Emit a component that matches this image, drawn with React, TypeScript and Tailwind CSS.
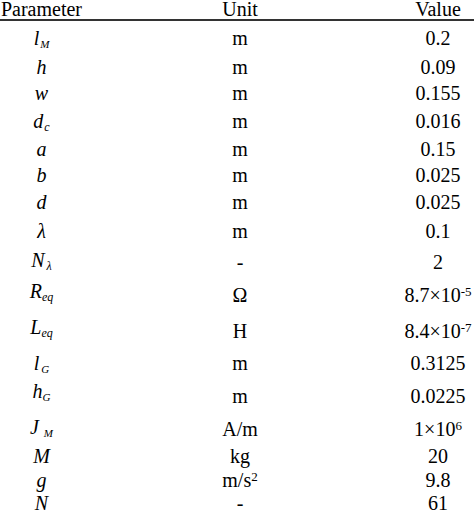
import React from "react";

type Row = {
  param: React.ReactNode;
  unit: React.ReactNode;
  value: React.ReactNode;
  h: string;
  shift?: string;
};

const Sub = ({ children, cls = "text-[11px]" }: { children: React.ReactNode; cls?: string }) => (
  <sub className={`${cls} italic`}>{children}</sub>
);

const Sup = ({ children }: { children: React.ReactNode }) => (
  <sup className="text-[13px]">{children}</sup>
);

const rows: Row[] = [
  { param: <><i>l</i><Sub cls="text-[11px] ml-[1px]">M</Sub></>, unit: "m", value: "0.2", h: "h-[29px]" },
  { param: <i>h</i>, unit: "m", value: "0.09", h: "h-[26px]" },
  { param: <i>w</i>, unit: "m", value: "0.155", h: "h-[28px]" },
  { param: <><i>d</i><Sub cls="text-[12px] ml-[1px]">c</Sub></>, unit: "m", value: "0.016", h: "h-[28px]" },
  { param: <i>a</i>, unit: "m", value: "0.15", h: "h-[26px]" },
  { param: <i>b</i>, unit: "m", value: "0.025", h: "h-[27px]" },
  { param: <i>d</i>, unit: "m", value: "0.025", h: "h-[29px]" },
  { param: <i>λ</i>, unit: "m", value: "0.1", h: "h-[31px]" },
  { param: <><i>N</i><Sub cls="text-[12px] ml-[2px]">λ</Sub></>, unit: "-", value: "2", h: "h-[33px]", shift: "-mt-[2px]" },
  { param: <><i>R</i><Sub cls="text-[12px]">eq</Sub></>, unit: "Ω", value: <>8.7×10<Sup>-5</Sup></>, h: "h-[36px]", shift: "-mt-[4px]" },
  { param: <><i>L</i><Sub cls="text-[12px]">eq</Sub></>, unit: "H", value: <>8.4×10<Sup>-7</Sup></>, h: "h-[32px]", shift: "-mt-[4px]" },
  { param: <><i>l</i><Sub cls="text-[11px] ml-[2px]">G</Sub></>, unit: "m", value: "0.3125", h: "h-[33px]" },
  { param: <><i>h</i><Sub cls="text-[11px]">G</Sub></>, unit: "m", value: "0.0225", h: "h-[33px]", shift: "-mt-[5px]" },
  { param: <><i>J</i><Sub cls="text-[11px] ml-[5px]">M</Sub></>, unit: "A/m", value: <>1×10<Sup>6</Sup></>, h: "h-[27px]", shift: "-mt-[2px]" },
  { param: <i>M</i>, unit: "kg", value: "20", h: "h-[24px]" },
  { param: <i>g</i>, unit: <>m/s<Sup>2</Sup></>, value: "9.8", h: "h-[23px]" },
  { param: <i>N</i>, unit: "-", value: "61", h: "h-[20px]" },
];

export default function App() {
  return (
    <div className="w-[474px] h-[520px] overflow-hidden bg-white text-black text-[20px] font-['Liberation_Serif','Times_New_Roman',serif]">
      <div className="grid grid-cols-[83px_314px_77px] h-[19px] leading-[18px] border-b-2 border-[#333] box-content">
        <div className="text-center">Parameter</div>
        <div className="text-center">Unit</div>
        <div className="text-center pl-[5px]">Value</div>
      </div>
      <div className="pt-[7px] flex flex-col">
        {rows.map((r, i) => (
          <div key={i} className={`grid grid-cols-[83px_314px_77px] leading-[20px] ${r.h}`}>
            <div className={`text-center whitespace-nowrap ${r.shift ?? ""}`}>{r.param}</div>
            <div className="text-center whitespace-nowrap">{r.unit}</div>
            <div className="text-center whitespace-nowrap pl-[5px]">{r.value}</div>
          </div>
        ))}
      </div>
    </div>
  );
}
